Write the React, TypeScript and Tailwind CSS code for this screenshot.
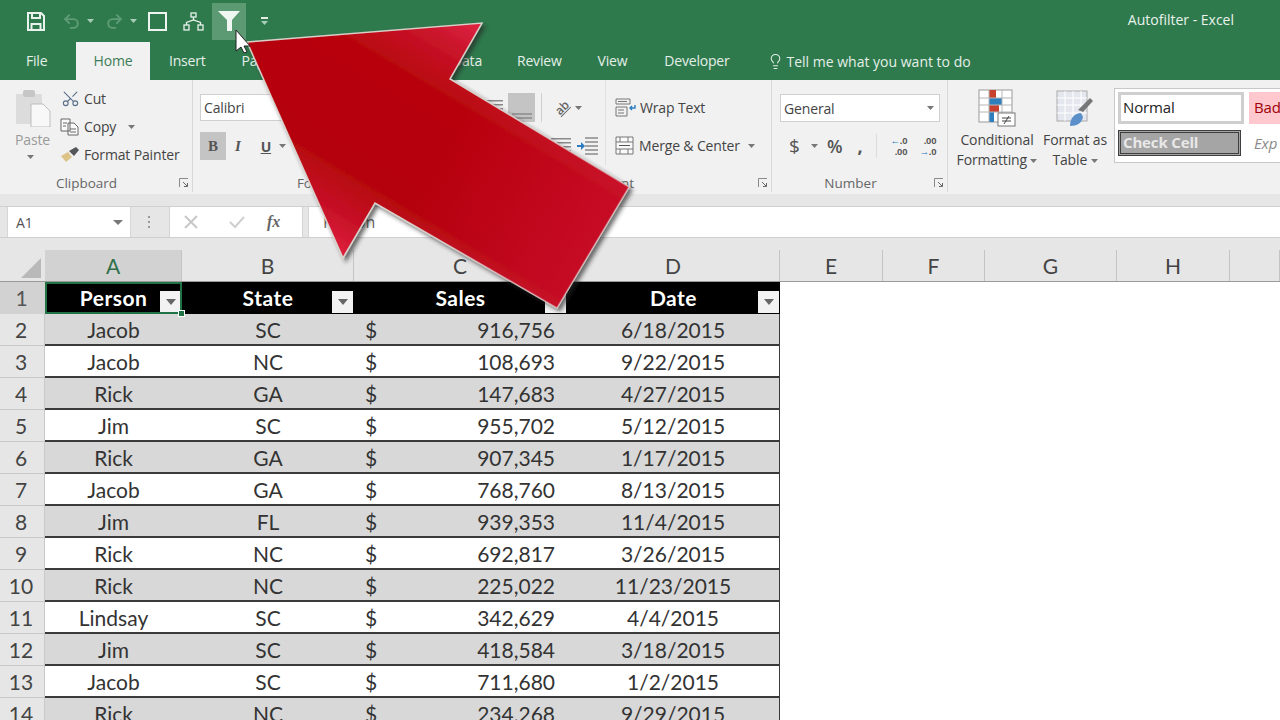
import { Scissors, Lightbulb, Undo2, Redo2 } from 'lucide-react'
import type { ReactNode } from 'react'

const rows = [
  ['Jacob', 'SC', '916,756', '6/18/2015'],
  ['Jacob', 'NC', '108,693', '9/22/2015'],
  ['Rick', 'GA', '147,683', '4/27/2015'],
  ['Jim', 'SC', '955,702', '5/12/2015'],
  ['Rick', 'GA', '907,345', '1/17/2015'],
  ['Jacob', 'GA', '768,760', '8/13/2015'],
  ['Jim', 'FL', '939,353', '11/4/2015'],
  ['Rick', 'NC', '692,817', '3/26/2015'],
  ['Rick', 'NC', '225,022', '11/23/2015'],
  ['Lindsay', 'SC', '342,629', '4/4/2015'],
  ['Jim', 'SC', '418,584', '3/18/2015'],
  ['Jacob', 'SC', '711,680', '1/2/2015'],
  ['Rick', 'NC', '234,268', '9/29/2015'],
]

function Caret({ light }: { light?: boolean }) {
  return (
    <svg width="7" height="4" viewBox="0 0 7 4" className="shrink-0">
      <path d="M0 0h7L3.500 4z" fill={light ? '#a9cdb6' : '#777'} />
    </svg>
  )
}

function Launcher() {
  return (
    <svg width="10" height="10" viewBox="0 0 10 10" className="shrink-0">
      <path d="M.5 9V.5H9" fill="none" stroke="#8a8a8a" />
      <path d="M4 4l4 4M5 8.500h3.500V5" fill="none" stroke="#666" />
    </svg>
  )
}

function Lines({ widths, color = '#8a8a8a' }: { widths: number[]; color?: string }) {
  return (
    <svg width="22" height="22" viewBox="0 0 22 22">
      {widths.map((w, i) => (
        <rect key={i} x={22 - w} y={3 + i * 4} width={w} height="1.500" fill={color} />
      ))}
    </svg>
  )
}

function Group({ width, label, labelClass = '', launcher, children }: { width: string; label: string; labelClass?: string; launcher?: boolean; children: ReactNode }) {
  return (
    <div className={`${width} shrink-0 flex flex-col border-r border-[#d8d8d8] mb-[2px]`}>
      <div className="h-[95px] flex">{children}</div>
      <div className={`h-[17px] relative flex items-center justify-center text-[13.500px] tracking-normal text-[#666] ${labelClass}`}>
        {label}
        {launcher && (
          <span className="absolute right-[3px] top-[3px]">
            <Launcher />
          </span>
        )}
      </div>
    </div>
  )
}

function FilterButton({ className }: { className: string }) {
  return (
    <div className={`${className} w-[21px] h-[22px] bg-[#f2f2f2] flex items-center justify-center`}>
      <svg width="10" height="6" viewBox="0 0 10 6">
        <path d="M0 0h10L5 6z" fill="#666" />
      </svg>
    </div>
  )
}

function QuickAccess() {
  return (
    <div className="flex items-center h-[42px] pl-[27px] pr-[46px] text-[#e9f2ec]">
      <svg width="18" height="19" viewBox="0 0 18 19" fill="none" stroke="#e9f2ec" strokeWidth="2">
        <path d="M1 1h13l3 3v14H1z" />
        <path d="M5 1v5h8V1M4.500 18v-6h9v6" />
      </svg>
      <Undo2 size={19} strokeWidth={2.4} className="ml-[17px] text-[#5f9c78]" />
      <span className="ml-[6px]"><Caret light /></span>
      <Redo2 size={19} strokeWidth={2.4} className="ml-[11px] text-[#5f9c78]" />
      <span className="ml-[6px]"><Caret light /></span>
      <div className="ml-[11px] w-[19px] h-[19px] border-2 border-[#eef5f0]" />
      <svg width="21" height="19" viewBox="0 0 21 19" className="ml-[16px]" fill="none" stroke="#e9f2ec" strokeWidth="1.300">
        <rect x="8" y="1" width="5" height="4" />
        <rect x="1" y="13" width="5" height="5" />
        <rect x="15" y="13" width="5" height="5" />
        <path d="M10.500 5v3M3.500 13v-2.500L10.500 8l7 2.500V13" />
      </svg>
      <div className="ml-[8px] w-[34px] h-[37px] bg-[#5b9a73] flex items-center justify-center">
        <svg width="22" height="20" viewBox="0 0 22 20">
          <path d="M0 0h22l-8 9v11H9V9z" fill="#f0f6f2" />
        </svg>
      </div>
      <div className="ml-[15px] flex flex-col items-center gap-[2px]">
        <div className="w-[7px] h-[2px] bg-[#e0ece4]" />
        <Caret light />
      </div>
      <div className="flex-1" />
      <span className="text-[14px] tracking-normal mt-[-4px]">Autofilter - Excel</span>
    </div>
  )
}

function Tabs() {
  const tabs: [string, string][] = [
    ['Insert', 'ml-[19px]'],
    ['Page Layout', 'ml-[36px]'],
    ['Formulas', 'ml-[36px]'],
    ['Data', 'ml-[38px]'],
    ['Review', 'ml-[35px]'],
    ['View', 'ml-[36px]'],
    ['Developer', 'ml-[37px]'],
  ]
  return (
    <div className="flex items-end h-[38px] text-[14px] text-[#e4efe8] tracking-[-0.2px]">
      <span className="ml-[26px] w-[22px] h-[38px] leading-[38px]">File</span>
      <div className="ml-[28px] w-[74px] h-[38px] bg-[#f1f1f1] text-[#3b7d57] text-center leading-[38px]">Home</div>
      {tabs.map(([t, c]) => (
        <span key={t} className={`${c} h-[38px] leading-[38px]`}>{t}</span>
      ))}
      <div className="ml-[37px] h-[38px] flex items-center">
        <Lightbulb size={17} strokeWidth={1.5} />
        <span className="ml-[3px] tracking-normal">Tell me what you want to do</span>
      </div>
    </div>
  )
}

function Ribbon() {
  return (
    <div className="h-[114px] bg-[#f1f1f1] flex text-[14px] text-[#444] tracking-[-0.15px] overflow-hidden">
      <Group width="w-[193px]" label="Clipboard" labelClass="pr-[19px]" launcher>
        <div className="w-[60px] pl-[15px] pt-[9px] flex flex-col items-start">
          <svg width="36" height="38" viewBox="0 0 36 38">
            <rect x="1" y="5" width="26" height="30" fill="#dcdcdc" />
            <rect x="8" y="1" width="12" height="7" rx="2" fill="#c6c6c6" />
            <path d="M16 15h12l7 7v16H16z" fill="#f8f8f8" stroke="#bdbdbd" />
          </svg>
          <span className="text-[#9a9a9a] mt-[3px] leading-[20px]">Paste</span>
          <span className="ml-[12px] mt-[5px]"><Caret /></span>
        </div>
        <div className="flex flex-col pt-[4px] text-[14px]">
          <div className="h-[28px] flex items-center">
            <Scissors size={19} strokeWidth={1.4} className="text-[#5a6f8a] -rotate-90 ml-[1px]" />
            <span className="ml-[4px]">Cut</span>
          </div>
          <div className="h-[29px] flex items-center">
            <svg width="19" height="18" viewBox="0 0 19 18" fill="#fafafa" stroke="#666">
              <path d="M1 1h9v12H1zM8 5h6l4 4v8H8z" />
              <path d="M3 5h4M3 8h3M10 11h6M10 14h6" />
            </svg>
            <span className="ml-[5px]">Copy</span>
            <span className="ml-[12px]"><Caret /></span>
          </div>
          <div className="h-[27px] flex items-center">
            <svg width="20" height="16" viewBox="0 0 20 16">
              <path d="M1 9l7-4 4 5-6 5z" fill="#dcc489" />
              <path d="M9 4l7-4 3 3-5 6z" fill="#55565a" />
            </svg>
            <span className="ml-[4px]">Format Painter</span>
          </div>
        </div>
      </Group>

      <Group width="w-[238px]" label="Font" labelClass="pr-[1px]" launcher>
        <div className="pl-[7px] pt-[14px] w-full flex flex-col">
          <div className="h-[27px] w-[130px] bg-white border border-[#d0d0d0] pl-[3px] leading-[25px]">Calibri</div>
          <div className="mt-[11px] flex items-center h-[28px]">
            <div className="w-[26px] h-[28px] bg-[#c4c4c4] flex items-center justify-center font-bold text-[#555] font-['Liberation_Serif'] text-[15px]">B</div>
            <span className="ml-[9px] italic font-bold font-['Liberation_Serif'] text-[15px] text-[#555]">I</span>
            <span className="ml-[20px] underline font-bold text-[14px] text-[#555]">U</span>
            <span className="ml-[8px]"><Caret /></span>
          </div>
        </div>
      </Group>

      <Group width="w-[341px]" label="Alignment" labelClass="pl-[2px]" launcher>
        <div className="w-[175px] pt-[13px] border-r border-[#e0e0e0] flex flex-col items-end mb-[10px]">
          <div className="flex items-center h-[29px] pr-[23px]">
            <Lines widths={[20, 20, 20]} />
            <div className="ml-[5px] w-[27px] h-[29px] bg-[#c4c4c4] flex items-end justify-center">
              <svg width="20" height="10" viewBox="0 0 20 10"><path d="M0 2h20M0 6h20" stroke="#8a8a8a" strokeWidth="1.500" /></svg>
            </div>
            <div className="w-[1px] h-[29px] bg-[#d0d0d0] ml-[6px]" />
            <div className="ml-[10px] w-[20px] h-[18px] flex items-center justify-center">
              <span className="-rotate-45 text-[12px] leading-[11px] font-semibold text-[#666] border-b border-[#666]">ab</span>
            </div>
            <span className="ml-[3px]"><Caret /></span>
          </div>
          <div className="flex items-center h-[29px] mt-[9px] pr-[7px]">
            <Lines widths={[20, 14, 20, 14]} />
            <svg width="22" height="22" viewBox="0 0 22 22" className="ml-[5px]">
              <path d="M9 3h13M9 7h13M9 11h13M9 15h13M9 19h13" stroke="#8a8a8a" strokeWidth="1.300" />
              <path d="M1 10h4V7l4 4-4 4v-3H1z" fill="#2d7cc0" />
            </svg>
          </div>
        </div>
        <div className="flex flex-col pl-[9px] pt-[14px] text-[14px]">
          <div className="h-[27px] flex items-center">
            <svg width="21" height="19" viewBox="0 0 21 19" fill="none" stroke="#777">
              <path d="M1 1h14v5H1zM1 9h11v9H1zM3 3.500h9M3 12h6M3 15h6" />
              <path d="M20 7v3h-5M17 8l-2 2 2 2" stroke="#2d7cc0" strokeWidth="1.400" />
            </svg>
            <span className="ml-[4px]">Wrap Text</span>
          </div>
          <div className="h-[27px] flex items-center mt-[11px]">
            <svg width="19" height="19" viewBox="0 0 19 19" fill="#fafafa" stroke="#777">
              <path d="M1 1h17v17H1zM1 6h17M1 13h17M5 1v5M13 1v5M5 13v5M13 13v5" />
              <path d="M4 9.500h11" stroke="#555" />
            </svg>
            <span className="ml-[5px]">Merge &amp; Center</span>
            <span className="ml-[8px]"><Caret /></span>
          </div>
        </div>
      </Group>

      <Group width="w-[176px]" label="Number" labelClass="pr-[18px]" launcher>
        <div className="pl-[8px] pt-[14px] flex flex-col">
          <div className="w-[160px] h-[28px] bg-white border border-[#d0d0d0] pl-[3px] flex items-center justify-between pr-[5px]">
            General
            <Caret />
          </div>
          <div className="flex items-center mt-[10px] h-[28px] pl-[9px] text-[#555]">
            <span className="text-[19px] w-[14px]">$</span>
            <span className="ml-[8px]"><Caret /></span>
            <span className="ml-[9px] text-[18px] font-semibold">%</span>
            <span className="ml-[15px] text-[18px] font-bold">,</span>
            <div className="ml-[14px] w-[1px] h-[24px] bg-[#ddd]" />
            <div className="ml-[9px] w-[21px] font-['Liberation_Sans'] text-[9.500px] leading-[11px] text-right font-bold"><span className="text-[#2d7cc0]">←</span>.0<br />.00</div>
            <div className="ml-[8px] w-[21px] font-['Liberation_Sans'] text-[9.500px] leading-[11px] text-right font-bold">.00<br /><span className="text-[#2d7cc0]">→</span>.0</div>
          </div>
        </div>
      </Group>

      <div className="flex-1 flex pb-[6px] pr-0 min-w-0">
        <div className="w-[80px] ml-[9px] flex flex-col items-center pt-[9px]">
          <svg width="38" height="38" viewBox="0 0 38 38">
            <rect x="1" y="1" width="33" height="32" fill="#fff" stroke="#999" />
            <rect x="11" y="1" width="7" height="8" fill="#c8402f" />
            <rect x="11" y="9" width="13" height="7" fill="#2f7fbe" />
            <rect x="11" y="16" width="10" height="7" fill="#c8402f" />
            <rect x="11" y="23" width="5" height="10" fill="#2f7fbe" />
            <path d="M1 9h33M1 16h33M1 23h33M11 1v32M24 1v32" stroke="#b5b5b5" fill="none" />
            <rect x="20" y="24" width="17" height="13" fill="#fff" stroke="#777" />
            <path d="M24 29h9M24 32h9M26 35l5-8" stroke="#444" />
          </svg>
          <span className="text-center leading-[20px] mt-[3px] whitespace-nowrap">Conditional<br />Formatting <span className="inline-block align-middle"><Caret /></span></span>
        </div>
        <div className="w-[78px] ml-[-1px] flex flex-col items-center pt-[10px]">
          <svg width="38" height="38" viewBox="0 0 38 38">
            <rect x="1" y="1" width="30" height="30" fill="#e4e8ee" stroke="#aaa" />
            <path d="M1 8h30M1 15h30M1 23h30M9 1v30M17 1v30M25 1v30" stroke="#fff" />
            <path d="M22 20l12-12 3 3-10 11z" fill="#777" />
            <path d="M14 36c0-8 5-13 11-13l2 4c-1 6-6 9-13 9z" fill="#5b8fc9" />
          </svg>
          <span className="text-center leading-[20px] mt-[2px] whitespace-nowrap">Format as<br />Table <span className="inline-block align-middle"><Caret /></span></span>
        </div>
        <div className="mt-[8px] h-[75px] flex-1 bg-white border border-[#c8c8c8] border-r-0 p-[3px] grid grid-cols-[126px_1fr] content-start gap-x-[5px] gap-y-[6px] overflow-hidden">
          <div className="h-[32px] border-[3px] border-[#cfcfcf] pl-[2px] pb-[1px] flex items-center text-[15px] text-[#222]">Normal</div>
          <div className="h-[32px] bg-[#ffc7ce] text-[#9c0006] pl-[5px] pb-[1px] flex items-center text-[15px]">Bad</div>
          <div className="h-[26px] w-[123px] bg-[#a5a5a5] border-[3px] border-double border-[#3f3f3f] pl-[2px] pb-[1px] flex items-center text-[15px] font-bold text-[#e8e8e8]">Check Cell</div>
          <div className="h-[26px] pl-[5px] flex items-center text-[15px] italic text-[#8a8a8a]">Exp</div>
        </div>
      </div>
    </div>
  )
}

function FormulaBar() {
  return (
    <div className="h-[56px] bg-[#e6e6e6] shrink-0">
      <div className="h-[13px] border-b border-[#d0d0d0]" />
      <div className="h-[31px] flex border-b border-[#cfcfcf] text-[14px] text-[#555]">
        <div className="ml-[7px] w-[124px] bg-white border border-[#d6d6d6] border-y-0 flex items-center justify-between pl-[8px] pr-[7px]">
          A1
          <svg width="10" height="5" viewBox="0 0 10 5"><path d="M0 0h10L5 5z" fill="#777" /></svg>
        </div>
        <div className="ml-[16px] w-[3px] flex flex-col justify-center gap-[3px] items-center">
          <span className="w-[2px] h-[2px] bg-[#999]" />
          <span className="w-[2px] h-[2px] bg-[#999]" />
          <span className="w-[2px] h-[2px] bg-[#999]" />
        </div>
        <div className="ml-[19px] w-[134px] bg-white border-x border-[#d6d6d6] flex items-center pl-[14px]">
          <svg width="14" height="14" viewBox="0 0 14 14"><path d="M1 1l12 12M13 1L1 13" stroke="#c8c8c8" strokeWidth="2" /></svg>
          <svg width="16" height="14" viewBox="0 0 16 14" className="ml-[31px]"><path d="M1 7l5 5L15 2" fill="none" stroke="#cfcfcf" strokeWidth="2" /></svg>
          <span className="ml-[22px] italic font-['Liberation_Serif'] text-[16px] font-bold text-[#666]">fx</span>
        </div>
        <div className="ml-[5px] flex-1 bg-white border-l border-[#d6d6d6] flex items-center pl-[14px] text-[16px] text-[#666]">Person</div>
      </div>
    </div>
  )
}

const grid = 'grid grid-cols-[45px_137px_172px_213px_213px_103px_102px_132px_113px_1fr]'

function Sheet() {
  const headCell = 'relative bg-black text-white font-bold tracking-[0.5px] flex items-center justify-center'
  return (
    <div className="font-['Lato',sans-serif] text-[21px] leading-[28px] text-[#333]">
      <div className={`${grid} h-[32px] bg-[#e6e6e6] border-b border-[#9a9a9a] text-[#444] items-stretch`}>
        <div className="flex items-end justify-end pb-[3px] pr-[4px]">
          <svg width="20" height="20" viewBox="0 0 20 20"><path d="M20 0v20H0z" fill="#b9b9b9" /></svg>
        </div>
        {['A', 'B', 'C', 'D', 'E', 'F', 'G', 'H', ''].map((c, i) => (
          <div key={i} className={`flex items-center justify-center border-r border-[#c4c4c4] ${c === 'A' ? 'bg-[#d2d2d2] text-[#2f6f4a]' : ''}`}>{c}</div>
        ))}
      </div>

      <div className={`${grid} h-[32px] bg-white`}>
        <div className="bg-[#d2d2d2] flex items-center justify-center pr-[2px] text-[#555]">1</div>
        <div className={headCell}>
          Person
          <FilterButton className="absolute right-[1px] top-[9px]" />
          <div className="absolute inset-0 border-2 border-[#217346]" />
          <div className="absolute right-[-3px] bottom-[-3px] w-[7px] h-[7px] bg-[#217346] border border-white z-10" />
        </div>
        <div className={headCell}>
          State
          <FilterButton className="absolute right-[1px] top-[9px]" />
        </div>
        <div className={headCell}>
          Sales
          <FilterButton className="absolute right-[1px] top-[9px]" />
        </div>
        <div className={headCell}>
          Date
          <FilterButton className="absolute right-[1px] top-[9px]" />
        </div>
      </div>

      {rows.map((r, i) => {
        const bg = i % 2 === 0 ? 'bg-[#d8d8d8]' : 'bg-white'
        return (
          <div key={i} className={`${grid} h-[32px] bg-white`}>
            <div className="bg-[#e6e6e6] flex items-center justify-center pr-[2px] pt-[1px] border-b border-[#c8c8c8] border-r text-[#444]">{i + 2}</div>
            <div className={`${bg} flex items-center justify-center pt-[2px] border-b-2 border-[#3a3a3a]`}>{r[0]}</div>
            <div className={`${bg} flex items-center justify-center pt-[2px] border-b-2 border-[#3a3a3a]`}>{r[1]}</div>
            <div className={`${bg} flex items-center justify-between pl-[11px] pr-[12px] pt-[2px] border-b-2 border-[#3a3a3a]`}>
              <span>$</span>
              <span>{r[2]}</span>
            </div>
            <div className={`${bg} flex items-center justify-center pt-[2px] border-b-2 border-r border-[#3a3a3a]`}>{r[3]}</div>
          </div>
        )
      })}
    </div>
  )
}

function ArrowOverlay() {
  const pts = '247,42 482,23 450,79 629,187 557,308 375,203 343,258'
  return (
    <svg width="1280" height="720" viewBox="0 0 1280 720" className="absolute inset-0 pointer-events-none">
      <defs>
        <linearGradient id="arrowFill" gradientUnits="userSpaceOnUse" x1="482" y1="23" x2="343" y2="258">
          <stop offset="0" stopColor="#e02644" />
          <stop offset="0.12" stopColor="#cb152c" />
          <stop offset="0.3" stopColor="#b8060f" />
          <stop offset="0.72" stopColor="#b5060e" />
          <stop offset="0.88" stopColor="#c91229" />
          <stop offset="1" stopColor="#e0203e" />
        </linearGradient>
        <linearGradient id="arrowEnd" gradientUnits="userSpaceOnUse" x1="440" y1="155" x2="600" y2="250">
          <stop offset="0" stopColor="#d4153a" stopOpacity="0" />
          <stop offset="1" stopColor="#d4153a" stopOpacity="0.55" />
        </linearGradient>
        <filter id="arrowShadow" x="-10%" y="-10%" width="120%" height="120%">
          <feDropShadow dx="3" dy="3" stdDeviation="2" floodColor="#222" floodOpacity="0.65" />
        </filter>
      </defs>
      <polygon points={pts} fill="url(#arrowFill)" stroke="#d9d0ca" strokeWidth="1.500" filter="url(#arrowShadow)" />
      <polygon points={pts} fill="url(#arrowEnd)" />
      <path d="M236 30v21l5-4 3 6 3-1-3-6h6z" fill="#fff" stroke="#222" strokeWidth="1" />
    </svg>
  )
}

export default function App() {
  return (
    <div className="relative w-[1280px] h-[720px] overflow-hidden bg-white font-['Open_Sans',sans-serif]">
      <div className="bg-[#2f7a4d]">
        <QuickAccess />
        <Tabs />
      </div>
      <Ribbon />
      <FormulaBar />
      <Sheet />
      <ArrowOverlay />
    </div>
  )
}
